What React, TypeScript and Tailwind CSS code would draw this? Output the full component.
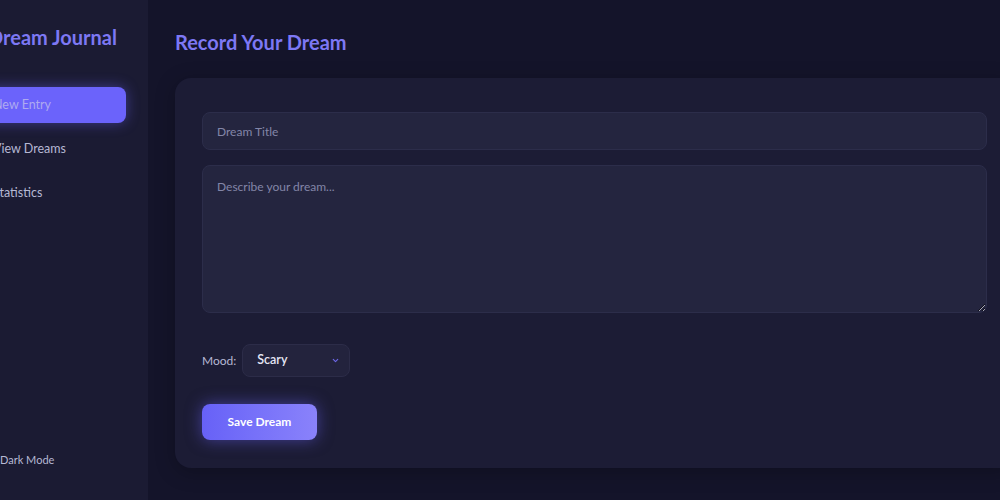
import { useState } from "react";

const navItems = ["New Entry", "View Dreams", "Statistics"];

export default function App() {
  const [active, setActive] = useState(0);
  const [mood, setMood] = useState("Scary");

  return (
    <div
      className="flex w-[1000px] h-[500px] overflow-hidden bg-[#14142a]"
      style={{ fontFamily: "Lato, 'Noto Sans', sans-serif" }}
    >
      {/* sidebar */}
      <aside className="w-[148px] shrink-0 h-full overflow-hidden bg-[#1b1b33]">
        <div className="w-[144px] ml-[-18px] h-full flex flex-col pt-[24px] pb-[32px]">
          <h1 className="pl-[6px] text-[20px] leading-[26px] font-bold text-[#7d78f4] whitespace-nowrap">
            Dream Journal
          </h1>
          <nav className="mt-[37px] flex flex-col gap-[8px]">
            {navItems.map((item, i) => (
              <button
                key={item}
                onClick={() => setActive(i)}
                className={
                  i === active
                    ? "h-[36px] pl-[11px] pr-[16px] text-left text-[12.5px] rounded-lg bg-[#6b63fb] text-[#aeaaf0] shadow-[0_0_14px_rgba(107,99,251,0.45)] whitespace-nowrap"
                    : "h-[36px] pl-[11px] pr-[16px] text-left text-[12.5px] rounded-lg text-[#b6b8d4] whitespace-nowrap"
                }
              >
                {item}
              </button>
            ))}
          </nav>
          <div className="mt-auto flex items-center gap-[6px] text-[11px] text-[#b6b8d4]">
            <span className="w-[12px]" />
            Dark Mode
          </div>
        </div>
      </aside>

      {/* main */}
      <main className="flex-1 min-w-0 pl-[27px] pt-[30px]">
        <h2 className="text-[20px] leading-[24px] font-bold text-[#7d78f4]">
          Record Your Dream
        </h2>
        <div className="mt-[24px] w-[839px] h-[390px] rounded-2xl bg-[#1c1c35] px-[27px] pt-[34px] shadow-[0_4px_20px_rgba(0,0,0,0.25)]">
          <input
            placeholder="Dream Title"
            className="w-full h-[38px] px-[14px] rounded-lg bg-[#24253f] border border-[#2c2d4a] text-[12px] text-[#d0d2ea] placeholder-[#8386a8] outline-none"
          />
          <textarea
            placeholder="Describe your dream..."
            className="mt-[15px] w-full h-[148px] px-[14px] py-[12px] rounded-lg bg-[#24253f] border border-[#2c2d4a] text-[12px] text-[#d0d2ea] placeholder-[#8386a8] outline-none block"
          />
          <div className="mt-[31px] flex items-center gap-[6px]">
            <span className="text-[12px] text-[#b6b8d4]">Mood:</span>
            <div className="relative w-[108px] h-[33px]">
              <select
                value={mood}
                onChange={(e) => setMood(e.target.value)}
                className="appearance-none w-full h-full pl-[14px] rounded-lg bg-[#23233d] border border-[#2c2c48] text-[12.5px] font-semibold text-[#e6e6f5] outline-none"
              >
                <option>Happy</option>
                <option>Sad</option>
                <option>Scary</option>
                <option>Weird</option>
              </select>
              <svg
                viewBox="0 0 24 24"
                className="absolute right-[10px] top-[12px] w-[9px] h-[9px] pointer-events-none"
                fill="none"
                stroke="#6d67e8"
                strokeWidth="3"
                strokeLinecap="round"
                strokeLinejoin="round"
              >
                <path d="M6 9l6 6 6-6" />
              </svg>
            </div>
          </div>
          <button className="mt-[27px] w-[115px] h-[36px] rounded-lg bg-gradient-to-r from-[#6761f7] to-[#8a82fb] text-white text-[12px] font-bold shadow-[0_0_16px_rgba(108,99,251,0.5)]">
            Save Dream
          </button>
        </div>
      </main>
    </div>
  );
}
